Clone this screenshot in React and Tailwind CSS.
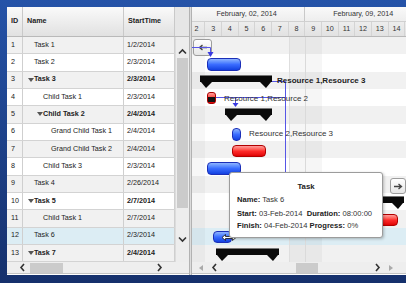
import React from "react";

const rows = [
  { id: 1, name: "Task 1", level: 0, date: "1/2/2014" },
  { id: 2, name: "Task 2", level: 0, date: "2/3/2014" },
  { id: 3, name: "Task 3", level: 0, date: "2/3/2014", parent: true },
  { id: 4, name: "Child Task 1", level: 1, date: "2/3/2014" },
  { id: 5, name: "Child Task 2", level: 1, date: "2/4/2014", parent: true },
  { id: 6, name: "Grand Child Task 1", level: 2, date: "2/4/2014" },
  { id: 7, name: "Grand Child Task 2", level: 2, date: "2/4/2014" },
  { id: 8, name: "Child Task 3", level: 1, date: "2/3/2014" },
  { id: 9, name: "Task 4", level: 0, date: "2/26/2014" },
  { id: 10, name: "Task 5", level: 0, date: "2/7/2014", parent: true },
  { id: 11, name: "Child Task 1", level: 1, date: "2/7/2014" },
  { id: 12, name: "Task 6", level: 0, date: "2/3/2014", selected: true },
  { id: 13, name: "Task 7", level: 0, date: "2/4/2014", parent: true },
];

const days = [2, 3, 4, 5, 6, 7, 8, 9, 10, 11, 12, 13, 14];

const indent = ["pl-[11px]", "pl-[20px]", "pl-[28px]"];
const caretPos = ["left-[5px]", "left-[14px]", "left-[22px]"];

function rowBg(r) {
  if (r.selected) return "bg-[#dcedf4]";
  return r.id % 2 ? "bg-[#f1f1f1]" : "bg-white";
}

function Chev({ dir, className = "" }) {
  const pts = {
    left: "5,1 2,4.5 5,8",
    right: "2,1 5,4.5 2,8",
    up: "1,5.5 4.5,2 8,5.5",
    down: "1,2.5 4.5,6 8,2.5",
  }[dir];
  return (
    <svg width="9" height="9" viewBox="0 0 9 9" className={className}>
      <polyline points={pts} fill="none" stroke="#333" strokeWidth="1.6" />
    </svg>
  );
}

// summary task bar: black strip with a down-pointing tab at each end
function Summary({ w, className }) {
  const d = `M0 0 H${w} V7 H${w - 1} L${w - 6} 13 L${w - 12} 7 H12 L6 13 L1 7 H0 Z`;
  return (
    <svg width={w} height="13" className={"absolute " + className}>
      <path d={d} fill="#0a0a0a" />
      <line x1="0" y1="0.5" x2={w} y2="0.5" stroke="#777" />
    </svg>
  );
}

const blueBar = "absolute rounded-[4px] border border-[#1b2fb8] bg-gradient-to-b from-[#8fb4ff] via-[#3a6cff] to-[#1340e0]";
const redBar = "absolute rounded-[4px] border border-[#b00000] bg-gradient-to-b from-[#ff9a9a] via-[#ff2a2a] to-[#e00000]";

function LeftGrid() {
  return (
    <div className="w-[182px] shrink-0 flex flex-col bg-white">
      <div className="flex h-[30px] bg-gradient-to-b from-[#fafafa] to-[#e1e1e1] border-b border-[#b9b9b9] font-bold text-[7.2px]">
        <div className="w-[16px] pl-[4px] flex items-center border-r border-[#c9c9c9]">ID</div>
        <div className="w-[101px] pl-[4px] flex items-center border-r border-[#c9c9c9]">Name</div>
        <div className="w-[51px] pl-[4px] flex items-center border-r border-[#c9c9c9]">StartTime</div>
        <div className="w-[14px] bg-[#e6e6e6]" />
      </div>
      <div className="flex h-[225px]">
        <div className="w-[168px] text-[7.2px]">
          {rows.map((r) => (
            <div key={r.id} className={"flex h-[17.33px] border-b border-[#d3d3d3] " + rowBg(r) + (r.parent ? " font-bold" : "")}>
              <div className="w-[16px] pl-[4px] flex items-center border-r border-[#cfcfcf] font-normal">{r.id}</div>
              <div className={"w-[101px] flex items-center border-r border-[#cfcfcf] relative " + indent[r.level]}>
                {r.parent && (
                  <svg width="6" height="4" viewBox="0 0 6 4" className={"absolute " + caretPos[r.level]}>
                    <polygon points="0,0 6,0 3,4" fill="#555" />
                  </svg>
                )}
                {r.name}
              </div>
              <div className="w-[51px] pl-[3px] flex items-center border-r border-[#cfcfcf]">{r.date}</div>
            </div>
          ))}
        </div>
        <div className="w-[14px] flex flex-col items-center bg-[#ededed] border-l border-[#dcdcdc]">
          <Chev dir="up" className="mt-[11px]" />
          <div className="w-[11px] h-[150px] mt-[1px] bg-[#cbcbcb]" />
          <Chev dir="down" className="mt-[27px]" />
        </div>
      </div>
      <div className="flex items-center h-[12px] bg-[#eeeeee] border-b border-[#c4c4c4]">
        <Chev dir="left" className="ml-[12px]" />
        <div className="w-[33px] h-[10px] ml-[2px] bg-[#cbcbcb]" />
        <Chev dir="right" className="ml-[93px]" />
      </div>
    </div>
  );
}

function Gantt() {
  return (
    <div className="w-[214px] shrink-0 flex flex-col overflow-hidden bg-white">
      <div className="h-[30px] bg-gradient-to-b from-[#f9f9f9] to-[#e2e2e2] border-b border-[#b9b9b9] text-[7.2px] text-[#333]">
        <div className="flex h-[15px] ml-[-3.3px] border-b border-[#d0d0d0]">
          <div className="w-[116.7px] shrink-0 flex items-center justify-center border-r border-[#c9c9c9]">February, 02, 2014</div>
          <div className="w-[116.7px] shrink-0 flex items-center justify-center border-r border-[#c9c9c9]">February, 09, 2014</div>
        </div>
        <div className="flex h-[14px] ml-[-3.3px]">
          {days.map((d) => (
            <div key={d} className="w-[16.67px] shrink-0 flex items-center justify-center border-r border-[#d4d4d4]">{d}</div>
          ))}
        </div>
      </div>
      <div className="relative h-[225px] overflow-hidden">
        {rows.map((r) => (
          <div key={r.id} className={"h-[17.33px] " + rowBg(r)} />
        ))}
        <div className="absolute top-0 left-[-3.3px] w-[16.67px] h-full bg-[#000]/[0.03]" />
        <div className="absolute top-0 left-[96.7px] w-[33.3px] h-full bg-[#000]/[0.035] border-l border-[#dedede]" />
        <div className="absolute top-0 left-[113.4px] w-px h-full bg-[#dadada]" />

        <div className="absolute left-[1px] top-[2px] w-[19px] h-[17px] rounded-[3px] border border-[#9d9d9d] bg-gradient-to-b from-white to-[#e6e6e6] flex items-center justify-center">
          <svg width="10" height="7" viewBox="0 0 10 7">
            <path d="M9 3.5H2M4.5 1L1.5 3.5L4.5 6" fill="none" stroke="#444" strokeWidth="1.3" />
          </svg>
        </div>
        <div className="absolute left-[198px] top-[141px] w-[16px] h-[16px] rounded-[3px] border border-[#9d9d9d] bg-gradient-to-b from-white to-[#e6e6e6] flex items-center justify-center">
          <svg width="10" height="7" viewBox="0 0 10 7">
            <path d="M1 3.5H8M5.5 1L8.5 3.5L5.5 6" fill="none" stroke="#444" strokeWidth="1.3" />
          </svg>
        </div>

        <div className={blueBar + " left-[15px] top-[21px] w-[34px] h-[13px]"} />
        <Summary w={72} className="left-[8px] top-[38px]" />
        <div className="absolute left-[15px] top-[55px] w-[9px] h-[12px] rounded-[3px] border border-[#a80000] bg-gradient-to-b from-[#ff9a9a] via-[#ff3030] to-[#e00000]">
          <div className="mt-[4px] w-[7px] h-[5px] bg-[#111]" />
        </div>
        <Summary w={47} className="left-[33px] top-[71px]" />
        <div className={blueBar + " left-[40px] top-[91px] w-[9px] h-[13px]"} />
        <div className={redBar + " left-[40px] top-[108px] w-[34px] h-[12px]"} />
        <div className={blueBar + " left-[15px] top-[125px] w-[34px] h-[13px]"} />
        <Summary w={132} className="left-[80px] top-[159px]" />
        <div className={redBar + " left-[80px] top-[177px] w-[126px] h-[12px]"} />
        <div className={blueBar + " left-[21px] top-[194px] w-[19px] h-[12px]"} />
        <Summary w={63} className="left-[24px] top-[211px]" />

        <svg width="214" height="225" className="absolute left-0 top-0">
          <g stroke="#5656e6" strokeWidth="1" fill="none">
            <path d="M0 10.5H18.5V16" />
            <path d="M80 44.5H93.5V170" />
            <path d="M24 60.5H93" />
            <path d="M43.5 60.5V67" />
          </g>
          <g fill="#3a3ae0">
            <polygon points="15.5,15 21.5,15 18.5,20" />
            <polygon points="40.5,66 46.5,66 43.5,70" />
          </g>
          <path d="M30 200.5L33.5 197.5V199.5H40.5V197.5L44 200.5L40.5 203.5V201.5H33.5V203.5Z" fill="#fff" stroke="#111" strokeWidth="0.8" />
        </svg>

        <div className="absolute left-[85px] top-[39px] leading-[10px] text-[8px] font-bold text-[#222] whitespace-nowrap">Resource 1,Resource 3</div>
        <div className="absolute left-[32px] top-[57px] leading-[10px] text-[8px] text-[#333] whitespace-nowrap">Resource 1,Resource 2</div>
        <div className="absolute left-[57px] top-[92px] leading-[10px] text-[8px] text-[#333] whitespace-nowrap">Resource 2,Resource 3</div>

        <div className="absolute left-[37px] top-[135px] w-[154px] h-[66px] bg-white border border-[#9c9c9c] rounded-[3px] shadow-[1px_1px_3px_rgba(0,0,0,0.25)] text-[7.6px] text-[#333] leading-[12px]">
          <div className="text-center font-bold text-[#222] text-[7.8px] mt-[8px]">Task</div>
          <div className="pl-[7px] mt-[1px]">
            <div><b className="text-[#222]">Name:</b> Task 6</div>
            <div className="mt-[2px]"><b className="text-[#222]">Start:</b> 03-Feb-2014&nbsp; <b className="text-[#222]">Duration:</b> 08:00:00</div>
            <div><b className="text-[#222]">Finish:</b> 04-Feb-2014 <b className="text-[#222]">Progress:</b> 0%</div>
          </div>
        </div>
      </div>
      <div className="flex items-center h-[12px] bg-[#eeeeee] border-b border-[#c4c4c4]">
        <svg width="5" height="6" viewBox="0 0 5 6" className="ml-[7px]"><polygon points="4,0 4,6 0,3" fill="#aaa" /></svg>
        <Chev dir="left" className="ml-[7px]" />
        <div className="w-[22px] h-[10px] ml-[76px] bg-[#cbcbcb]" />
        <Chev dir="right" className="ml-[56px]" />
        <svg width="5" height="6" viewBox="0 0 5 6" className="ml-[5px]"><polygon points="1,0 1,6 5,3" fill="#aaa" /></svg>
      </div>
    </div>
  );
}

export default function App() {
  return (
    <div className="w-[406px] h-[283px] overflow-hidden bg-gradient-to-b from-[#2553a8] to-[#15306c] pt-[7px] pl-[7px] font-['Liberation_Sans',Arial,sans-serif] text-[#222]">
      <div className="flex w-[399px] h-[268px]">
        <LeftGrid />
        <div className="w-[3px] shrink-0 bg-[#dcdcdc] border-x border-[#b2b2b2]" />
        <Gantt />
      </div>
    </div>
  );
}
